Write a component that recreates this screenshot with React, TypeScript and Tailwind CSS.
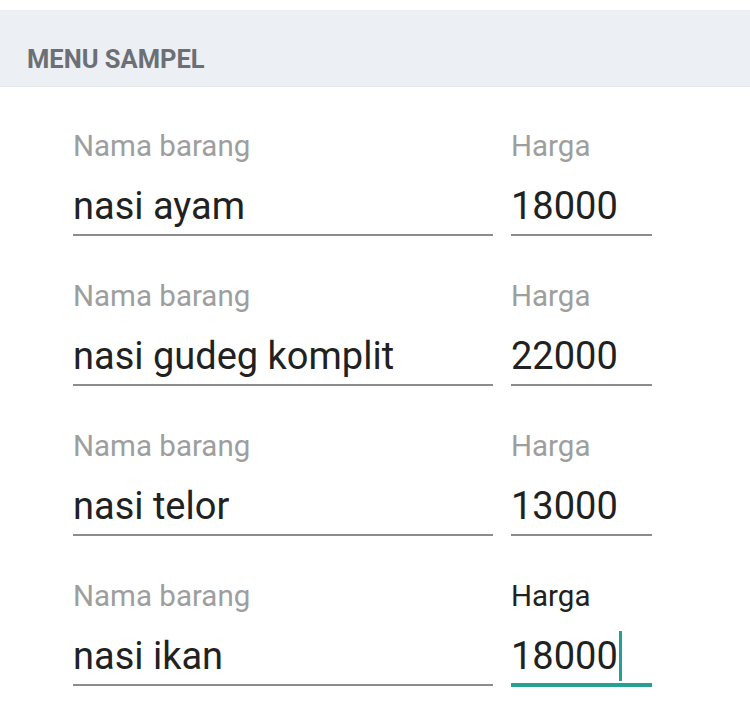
const items = [
  { name: "nasi ayam", price: "18000" },
  { name: "nasi gudeg komplit", price: "22000" },
  { name: "nasi telor", price: "13000" },
  { name: "nasi ikan", price: "18000", active: true },
];

function Field({ label, value, width, active }: { label: string; value: string; width: string; active?: boolean }) {
  return (
    <div className={`flex flex-col ${width}`}>
      <span className={`text-[29.5px] leading-[34px] ${active ? "text-[#212121]" : "text-[#9e9e9e]"}`}>{label}</span>
      <div
        className={`mt-[21px] flex items-center ${
          active ? "border-b-[4px] border-[#26a095] pb-[5px]" : "border-b-2 border-[#8c8c8c] pb-[6px]"
        }`}
      >
        <span className="text-[38px] leading-[44px] text-[#212121]">{value}</span>
        {active && <span className="-my-[3px] ml-[1px] h-[50px] w-[3px] bg-[#26a095]" />}
      </div>
    </div>
  );
}

export default function App() {
  return (
    <div className="h-[721px] w-[750px] bg-white pt-[10px] font-['Roboto',sans-serif]">
      <div className="flex h-[77px] items-end border-b border-[#e3e6ea] bg-[#eceff3] pb-[14px] pl-[27px]">
        <span className="text-[25.5px] font-bold leading-none text-[#6c6f75]">MENU SAMPEL</span>
      </div>
      <div className="flex flex-col gap-[43px] pl-[73px] pt-[42px]">
        {items.map((it, i) => (
          <div key={i} className="flex gap-[18px]">
            <Field label="Nama barang" value={it.name} width="w-[420px]" />
            <Field label="Harga" value={it.price} width="w-[141px]" active={it.active} />
          </div>
        ))}
      </div>
    </div>
  );
}
